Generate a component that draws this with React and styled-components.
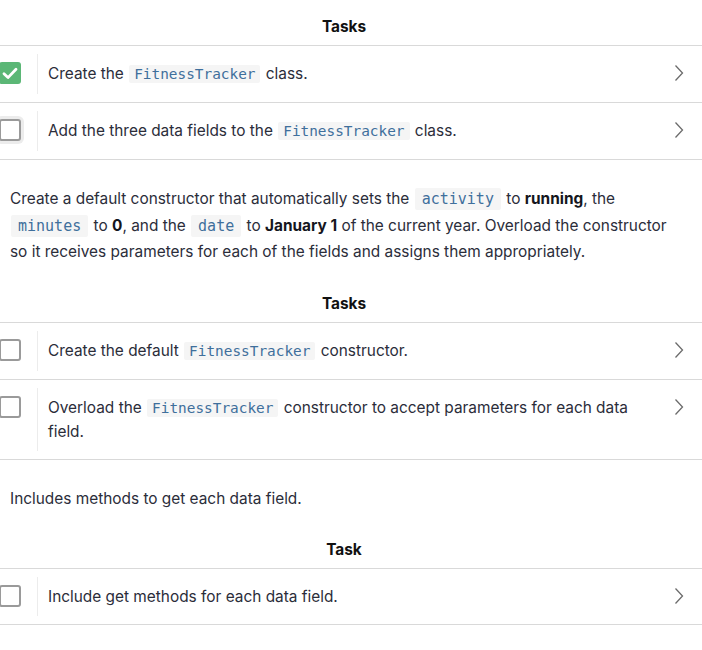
import React from "react";
import styled, { createGlobalStyle } from "styled-components";

const GlobalStyle = createGlobalStyle`
  body {
    margin: 0;
    background: #fff;
    font-family: Inter, "Noto Sans", Arial, sans-serif;
    color: #2b2d3a;
  }
`;

const sections = [
  {
    title: "Tasks",
    tasks: [
      { done: true, parts: ["Create the ", { code: "FitnessTracker" }, " class."] },
      {
        focused: true,
        parts: ["Add the three data fields to the ", { code: "FitnessTracker" }, " class."],
      },
    ],
  },
  {
    intro: [
      "Create a default constructor that automatically sets the ",
      { code: "activity" },
      " to ",
      { bold: "running" },
      ", the ",
      { code: "minutes" },
      " to ",
      { bold: "0" },
      ", and the ",
      { code: "date" },
      " to ",
      { bold: "January 1" },
      " of the current year. Overload the constructor so it receives parameters for each of the fields and assigns them appropriately.",
    ],
    title: "Tasks",
    tasks: [
      { parts: ["Create the default ", { code: "FitnessTracker" }, " constructor."] },
      {
        parts: [
          "Overload the ",
          { code: "FitnessTracker" },
          " constructor to accept parameters for each data field.",
        ],
      },
    ],
  },
  {
    intro: ["Includes methods to get each data field."],
    title: "Task",
    tasks: [{ parts: ["Include get methods for each data field."] }],
  },
];

function Rich({ parts, small }) {
  return parts.map((p, i) => {
    if (typeof p === "string") return <React.Fragment key={i}>{p}</React.Fragment>;
    if (p.code) return <Code key={i} small={small}>{p.code}</Code>;
    return <strong key={i}>{p.bold}</strong>;
  });
}

function Chevron() {
  return (
    <svg width="10" height="18" viewBox="0 0 10 18" fill="none">
      <polyline points="1.5,1.5 8.5,9 1.5,16.5" stroke="#6b6b6b" strokeWidth="1.3" />
    </svg>
  );
}

function Check() {
  return (
    <svg width="16" height="13" viewBox="0 0 16 13" fill="none">
      <polyline
        points="2,6.8 6,10.6 14,2.2"
        stroke="#fff"
        strokeWidth="2.8"
        strokeLinecap="round"
        strokeLinejoin="round"
      />
    </svg>
  );
}

export default function App() {
  return (
    <Page>
      <GlobalStyle />
      {sections.map((s, si) => (
        <Section key={si}>
          {s.intro && (
            <Intro>
              <Rich parts={s.intro} />
            </Intro>
          )}
          <Heading>{s.title}</Heading>
          <TaskList>
            {s.tasks.map((t, ti) => (
              <TaskRow key={ti}>
                <CheckCell>
                  <Box done={t.done} focused={t.focused}>
                    {t.done && <Check />}
                  </Box>
                </CheckCell>
                <TaskText>
                  <Rich parts={t.parts} small />
                </TaskText>
                <Arrow>
                  <Chevron />
                </Arrow>
              </TaskRow>
            ))}
          </TaskList>
        </Section>
      ))}
    </Page>
  );
}

const Page = styled.div`
  width: 702px;
  padding-top: 15px;
  overflow: hidden;
`;

const Section = styled.section`
  & + & {
    margin-top: 26px;
  }
`;

const Intro = styled.p`
  margin: 0 0 27px;
  padding: 0 22px 0 10px;
  font-size: 15.4px;
  line-height: 25.5px;
  color: #2b2d3a;

  strong {
    font-weight: 700;
    color: #15161d;
  }
`;

const Heading = styled.h3`
  margin: 0 0 6px;
  padding-right: 14px;
  text-align: center;
  font-size: 15.4px;
  line-height: 24px;
  font-weight: 700;
  color: #111;
`;

const TaskList = styled.div`
  border-top: 1px solid #d9d9d9;
`;

const TaskRow = styled.div`
  display: flex;
  align-items: stretch;
  padding: 8px 0;
  border-bottom: 1px solid #d9d9d9;
`;

const CheckCell = styled.div`
  width: 37px;
  flex-shrink: 0;
  border-right: 1px solid #ececec;
  padding-top: 8px;
`;

const Box = styled.div`
  width: 22px;
  height: 22px;
  margin-left: -1px;
  box-sizing: border-box;
  border-radius: 3px;
  display: flex;
  align-items: center;
  justify-content: center;
  background: ${(p) => (p.done ? "#5bb776" : "#fff")};
  border: ${(p) => (p.done ? "none" : "2px solid #9a9a9a")};
  box-shadow: ${(p) => (p.focused ? "0 0 0 3px #ececec" : "none")};
`;

const TaskText = styled.div`
  flex: 1;
  padding: 8px 30px 8px 10px;
  font-size: 15.4px;
  line-height: 23px;
  color: #2b2d3a;
`;

const Arrow = styled.div`
  width: 28px;
  flex-shrink: 0;
  padding-top: 10px;
`;

const Code = styled.code`
  font-family: "DejaVu Sans Mono", "Liberation Mono", monospace;
  font-size: ${(p) => (p.small ? "14.4px" : "15px")};
  color: #3f6f9c;
  background: #f5f5f5;
  padding: ${(p) => (p.small ? "1px 5px" : "2px 7px")};
  margin: 0 1px;
  border-radius: 2px;
`;
